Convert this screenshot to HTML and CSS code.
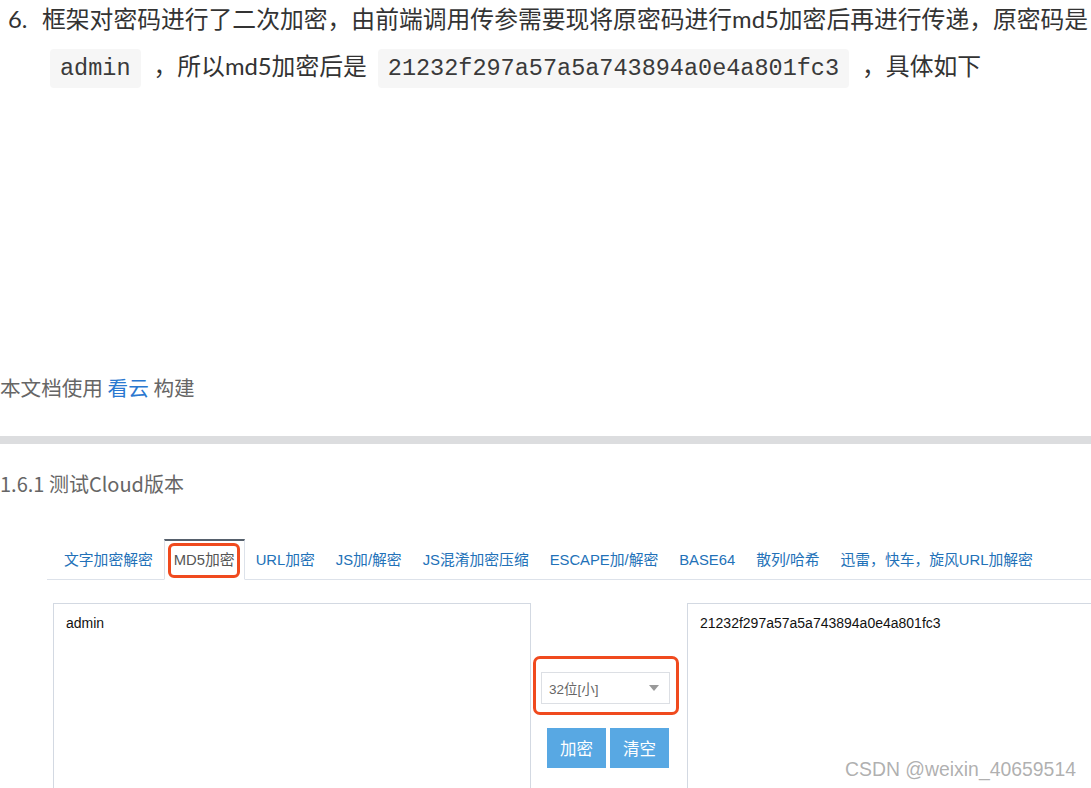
FILE: index.html
```html
<!DOCTYPE html>
<html lang="zh">
<head>
<meta charset="utf-8">
<title>MD5</title>
<link rel="stylesheet" href="styles.css">
</head>
<body>
<div class="page">
  <div class="step">
    <span class="num">6.</span>
    <p class="text">框架对密码进行了二次加密，由前端调用传参需要现将原密码进行md5加密后再进行传递，原密码是<code class="c1">admin</code>，所以md5加密后是<code class="c2">21232f297a57a5a743894a0e4a801fc3</code>，具体如下</p>
  </div>

  <div class="built">本文档使用 <a class="link" href="#">看云</a> 构建</div>
  <div class="bar"></div>
  <div class="heading">1.6.1 测试Cloud版本</div>

  <div class="tabs">
    <div class="tab">文字加密解密</div>
    <div class="tab active">MD5加密<span class="mark mark-tab"></span></div>
    <div class="tab">URL加密</div>
    <div class="tab">JS加/解密</div>
    <div class="tab">JS混淆加密压缩</div>
    <div class="tab">ESCAPE加/解密</div>
    <div class="tab">BASE64</div>
    <div class="tab">散列/哈希</div>
    <div class="tab">迅雷，快车，旋风URL加解密</div>
  </div>

  <div class="panel">
    <div class="area">admin</div>
    <div class="middle">
      <div class="select">
        <span>32位[小]</span>
        <span class="caret"></span>
        <span class="mark mark-select"></span>
      </div>
      <div class="buttons">
        <div class="btn">加密</div>
        <div class="btn">清空</div>
      </div>
    </div>
    <div class="area">21232f297a57a5a743894a0e4a801fc3</div>
  </div>

  <div class="watermark">CSDN @weixin_40659514</div>
</div>
</body>
</html>
```

FILE: styles.css
```css
html, body {
  margin: 0;
  padding: 0;
  background: #fff;
  overflow: hidden;
}
.page {
  position: relative;
  width: 1091px;
  height: 788px;
  overflow: hidden;
  font-family: Lato, "Noto Sans CJK SC", sans-serif;
}
.step {
  display: flex;
  margin-top: -4px;
  color: #333;
  font-size: 23.8px;
  line-height: 47px;
}
.num {
  flex: 0 0 42px;
  padding-left: 8px;
  box-sizing: border-box;
}
.text {
  margin: 0;
  flex: 1;
  min-width: 0;
}
.text code {
  font-family: "Liberation Mono", monospace;
  font-size: 23.5px;
  background: #f6f6f6;
  border-radius: 4px;
  padding: 6px 10px;
  color: #3a3a3a;
}
.c1 {
  margin: 0 13px 0 8px;
}
.c2 {
  margin: 0 13px 0 11px;
}
.built {
  margin-top: 281px;
  font-family: "Noto Sans CJK SC", sans-serif;
  font-size: 20.6px;
  line-height: 28px;
  color: #666;
}
.link {
  color: #2a78d0;
  text-decoration: none;
}
.bar {
  margin-top: 35px;
  height: 8px;
  background: #dcdddf;
}
.heading {
  margin-top: 26px;
  font-family: "Noto Sans CJK SC", sans-serif;
  font-size: 20px;
  line-height: 28px;
  color: #666;
}
.tabs {
  display: flex;
  margin-top: 41px;
  margin-left: 47px;
  border-bottom: 1px solid #dde2ea;
  height: 40px;
  font-family: "Liberation Sans", "Noto Sans CJK SC", sans-serif;
  font-size: 14.8px;
}
.tab {
  position: relative;
  padding: 0 10px;
  margin-right: 1px;
  height: 40px;
  line-height: 42px;
  color: #2271b8;
  white-space: nowrap;
}
.tab:first-child {
  margin-left: 7px;
}
.tab.active {
  color: #555;
  background: #fff;
  border: 1px solid #dde2ea;
  border-top: 2px solid #56606c;
  border-bottom-color: #fff;
  line-height: 39px;
  height: 38px;
  margin-bottom: -1px;
  padding: 0 9px;
}
.mark {
  position: absolute;
  border: 3px solid #f04a1e;
  border-radius: 6px;
}
.mark-tab {
  left: 3px;
  right: 4px;
  top: 2px;
  bottom: 1px;
}
.panel {
  display: flex;
  margin-top: 23px;
  margin-left: 53px;
  width: 1200px;
  font-family: "Liberation Sans", "Noto Sans CJK SC", sans-serif;
}
.area {
  flex: 0 0 478px;
  height: 220px;
  box-sizing: border-box;
  border: 1px solid #d3d9e2;
  padding: 9px 12px;
  font-size: 14px;
  line-height: 20px;
  color: #111;
}
.middle {
  flex: 0 0 156px;
  display: flex;
  flex-direction: column;
  padding-top: 69px;
}
.select {
  position: relative;
  margin-left: 10px;
  width: 129px;
  height: 32px;
  box-sizing: border-box;
  border: 1px solid #dcdfe4;
  display: flex;
  align-items: center;
  justify-content: space-between;
  padding: 0 10px 0 7px;
  font-size: 13.5px;
  color: #666;
}
.caret {
  width: 0;
  height: 0;
  border-left: 5px solid transparent;
  border-right: 5px solid transparent;
  border-top: 6px solid #999;
}
.mark-select {
  left: -9px;
  right: -10px;
  top: -17px;
  bottom: -12px;
  border-radius: 7px;
}
.buttons {
  display: flex;
  gap: 4px;
  margin-top: 24px;
  margin-left: 16px;
}
.btn {
  width: 59px;
  height: 40px;
  background: #58a8e3;
  color: #fff;
  font-family: "Noto Sans CJK SC", sans-serif;
  font-size: 16.5px;
  line-height: 40px;
  text-align: center;
}
.watermark {
  position: absolute;
  left: 845px;
  top: 757px;
  font-family: "Liberation Sans", sans-serif;
  font-size: 19.4px;
  line-height: 24px;
  color: rgba(150, 150, 150, 0.75);
  white-space: nowrap;
}
```
